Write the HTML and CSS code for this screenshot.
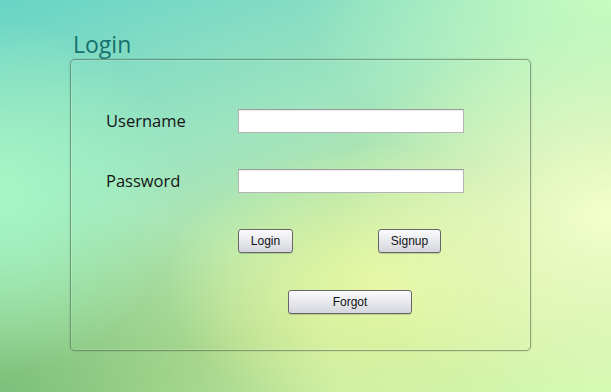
FILE: index.html
```html
<!DOCTYPE html>
<html lang="en">
  <head>
    <meta charset="UTF-8" />
    <meta name="viewport" content="width=device-width, initial-scale=1.0" />
    <title>Login</title>
    <link rel="stylesheet" href="styles.css">
  </head>

  <body>
    <div class="main">
      <h1 class="title">Login</h1>
      <!-- Login panel -->
      <form class="panel">
        <div class="row">
          <label for="username">Username</label>
          <input type="text" name="username" id="username" />
        </div>

        <div class="row">
          <label for="password">Password</label>
          <input type="password" name="password" id="password" />
        </div>

        <div class="actions">
          <button type="button" class="btn login">Login</button>
          <button type="button" class="btn signup">Signup</button>
        </div>

        <div class="forgotRow">
          <button type="button" class="btn forgot">Forgot</button>
        </div>
      </form>
    </div>
  </body>
</html>
```

FILE: styles.css
```css
* {
  margin: 0;
  padding: 0;
  box-sizing: border-box;
}

html,
body {
  height: 100%;
}

body {
  font-family: "Open Sans", "Noto Sans", sans-serif;
  background:
    radial-gradient(ellipse 45% 50% at 100% 55%, #f4ffcc 0%, rgba(244, 255, 204, 0) 100%),
    radial-gradient(ellipse 35% 35% at 62% 72%, #e6f8a4 0%, rgba(230, 248, 164, 0) 100%),
    radial-gradient(ellipse 30% 45% at 0% 50%, #a6f6c4 0%, rgba(166, 246, 196, 0) 100%),
    radial-gradient(ellipse 55% 50% at 0% 100%, #7ac07a 0%, rgba(122, 192, 122, 0) 100%),
    radial-gradient(ellipse 50% 50% at 100% 0%, #c6fcc0 0%, rgba(198, 252, 192, 0) 100%),
    linear-gradient(160deg, #68d4c6 0%, #9ee4c0 35%, #c4e498 70%, #d2fab0 100%);
  overflow: hidden;
}

.main {
  padding: 30px 0 0 70px;
}

.title {
  font-weight: 400;
  font-size: 23px;
  line-height: 29px;
  color: #17706c;
  padding-left: 3px;
}

.panel {
  width: 461px;
  height: 292px;
  border: 1px solid rgba(80, 110, 80, 0.6);
  border-radius: 5px;
  box-shadow: inset 0 0 2px rgba(255, 255, 255, 0.5), 0 0 2px rgba(0, 0, 0, 0.2);
  padding: 49px 0 0 35px;
  display: flex;
  flex-direction: column;
  gap: 36px;
}

.row {
  display: flex;
  align-items: center;
  height: 24px;
}

.row label {
  width: 132px;
  font-size: 16.5px;
  color: #151515;
  margin-top: -2px;
}

.row input {
  width: 226px;
  height: 24px;
  border: 1px solid #b4b4b4;
  border-top-color: #9c9c9c;
  background-color: white;
  box-shadow: inset 0 1px 1px rgba(0, 0, 0, 0.08);
  outline: none;
}

.actions {
  display: flex;
  gap: 85px;
  padding-left: 132px;
}

.forgotRow {
  padding-left: 182px;
}

.btn {
  height: 24px;
  font-family: "Liberation Sans", Arial, sans-serif;
  font-size: 12px;
  color: #111;
  background: linear-gradient(#fbfbfd, #e8e9ed 50%, #d4d6dd);
  border: 1px solid #666;
  border-radius: 3px;
  box-shadow: 0 1px 0 rgba(0, 0, 0, 0.15);
  cursor: pointer;
}

.login {
  width: 55px;
}

.signup {
  width: 63px;
}

.forgot {
  width: 124px;
}
```
